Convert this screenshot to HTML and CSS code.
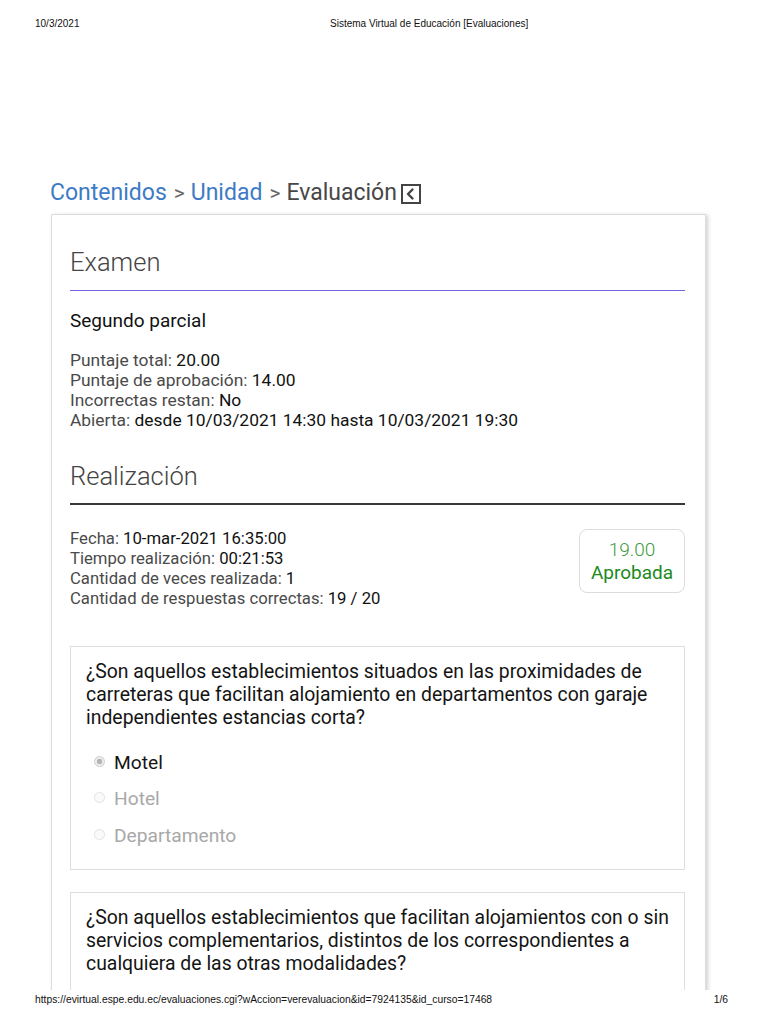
FILE: index.html
```html
<!DOCTYPE html>
<html lang="es">
<head>
<meta charset="utf-8">
<title>Sistema Virtual de Educación [Evaluaciones]</title>
<link rel="stylesheet" href="styles.css">
</head>
<body>
<div class="page">
  <header class="print-header">
    <span class="ph-date">10/3/2021</span>
    <span class="ph-title">Sistema Virtual de Educación [Evaluaciones]</span>
  </header>
  <main class="content">
    <nav class="breadcrumb">
      <a class="crumb-link">Contenidos</a><span class="sep">&gt;</span><a class="crumb-link">Unidad</a><span class="sep">&gt;</span><span class="crumb-current">Evaluación</span>
      <span class="back-icon"><svg viewBox="0 0 20 20" width="20" height="20"><rect x="1" y="1" width="18" height="18" fill="none" stroke="#444" stroke-width="2"/><path d="M11.5 5.5 L7 10 L11.5 14.5" fill="none" stroke="#444" stroke-width="2.4" stroke-linecap="round" stroke-linejoin="round"/></svg></span>
    </nav>
    <section class="card">
      <h2 class="section-title">Examen</h2>
      <hr class="rule rule-purple">
      <div class="exam-name">Segundo parcial</div>
      <div class="info info-exam">
        <div><span class="lbl">Puntaje total:</span> 20.00</div>
        <div><span class="lbl">Puntaje de aprobación:</span> 14.00</div>
        <div><span class="lbl">Incorrectas restan:</span> No</div>
        <div><span class="lbl">Abierta:</span> desde 10/03/2021 14:30 hasta 10/03/2021 19:30</div>
      </div>
      <h2 class="section-title title-2">Realización</h2>
      <hr class="rule rule-dark">
      <div class="result-row">
        <div class="info info-result">
          <div><span class="lbl">Fecha:</span> 10-mar-2021 16:35:00</div>
          <div><span class="lbl">Tiempo realización:</span> 00:21:53</div>
          <div><span class="lbl">Cantidad de veces realizada:</span> 1</div>
          <div><span class="lbl">Cantidad de respuestas correctas:</span> 19 / 20</div>
        </div>
        <div class="score">
          <div class="score-num">19.00</div>
          <div class="score-state">Aprobada</div>
        </div>
      </div>
      <div class="question">
        <p class="q-text">¿Son aquellos establecimientos situados en las proximidades de carreteras que facilitan alojamiento en departamentos con garaje independientes estancias corta?</p>
        <ul class="options">
          <li class="opt opt-selected"><span class="radio checked"></span>Motel</li>
          <li class="opt opt-dim"><span class="radio"></span>Hotel</li>
          <li class="opt opt-dim"><span class="radio"></span>Departamento</li>
        </ul>
      </div>
      <div class="question question-cut">
        <p class="q-text">¿Son aquellos establecimientos que facilitan alojamientos con o sin servicios complementarios, distintos de los correspondientes a cualquiera de las otras modalidades?</p>
      </div>
    </section>
  </main>
  <footer class="print-footer">
    <span class="pf-url">https://evirtual.espe.edu.ec/evaluaciones.cgi?wAccion=verevaluacion&amp;id=7924135&amp;id_curso=17468</span>
    <span class="pf-page">1/6</span>
  </footer>
</div>
</body>
</html>
```
FILE: styles.css
```css
html, body {
  margin: 0;
  padding: 0;
  background: #fff;
}
.page {
  width: 768px;
  height: 1024px;
  display: flex;
  flex-direction: column;
  overflow: hidden;
}
.print-header {
  height: 48px;
  flex: none;
  display: flex;
  align-items: flex-start;
  padding: 18px 0 0 35px;
  box-sizing: border-box;
  font-family: "Liberation Sans", Arial, sans-serif;
  font-size: 10px;
  color: #111;
}
.ph-date { width: 50px; }
.ph-title { margin-left: 245px; }

.content {
  flex: 1;
  overflow: hidden;
  padding: 0 62px 0 51px;
  font-family: Roboto, "Noto Sans", sans-serif;
}
.breadcrumb {
  margin-top: 130px;
  height: 30px;
  display: flex;
  align-items: center;
  font-size: 23px;
  line-height: 30px;
  color: #666;
  margin-left: -1px;
}
.crumb-link { color: #3d7bc6; }
.sep { margin: 0 6px 0 7px; color: #666; font-size: 21px; }
.crumb-current { color: #474747; }
.back-icon { display: inline-flex; margin-left: 4px; margin-top: 2px; }

.card {
  margin-top: 6px;
  border: 1px solid #ddd;
  box-shadow: 2px 1px 4px rgba(0,0,0,0.18);
  padding: 33px 20px 0 18px;
  min-height: 900px;
}
.section-title {
  margin: 0;
  font-weight: 300;
  font-size: 25.5px;
  line-height: 28px;
  color: #444;
}
.title-2 { margin-top: 32px; }
.rule {
  border: 0;
  margin: 14px 0 0 0;
}
.rule-purple { height: 1px; background: #6f63e6; }
.rule-dark { height: 2px; background: #383838; margin-top: 13px; }
.exam-name {
  margin-top: 19px;
  font-size: 19px;
  line-height: 22px;
  color: #111;
}
.info {
  font-size: 17.4px;
  line-height: 20px;
  color: #111;
}
.info-exam { margin-top: 18px; }
.info-result { font-size: 16.7px; }
.lbl { color: #4a4a4a; }
.result-row {
  margin-top: 24px;
  display: flex;
  justify-content: space-between;
  align-items: flex-start;
}
.score {
  width: 106px;
  box-sizing: border-box;
  margin-top: 0;
  border: 1px solid #dcdcdc;
  border-radius: 8px;
  padding: 8px 0 8px;
  text-align: center;
  font-size: 19px;
  line-height: 23px;
}
.score-num { color: #3f9a3f; font-weight: 300; }
.score-state { color: #1c8a1c; }

.question {
  margin-top: 37px;
  border: 1px solid #dedede;
  padding: 13px 15px 15px 15px;
}
.question-cut { margin-top: 22px; min-height: 300px; }
.q-text {
  margin: 0;
  font-size: 19.4px;
  line-height: 23px;
  color: #141414;
}
.options {
  list-style: none;
  margin: 15px 0 0 0;
  padding: 0 0 0 8px;
}
.opt {
  display: flex;
  align-items: center;
  height: 36.5px;
  font-size: 19.2px;
}
.opt-selected { color: #151515; }
.opt-dim { color: #a8a8a8; }
.radio {
  width: 11px;
  height: 11px;
  box-sizing: border-box;
  border: 1px solid #e2e2e2;
  border-radius: 50%;
  margin-right: 9px;
  margin-top: -2px;
  background: #fafafa;
}
.radio.checked {
  border-color: #cfcfcf;
  background: radial-gradient(circle, #b5b5b5 0 2.6px, #ececec 3px);
}

.print-footer {
  height: 34px;
  flex: none;
  display: flex;
  justify-content: space-between;
  padding: 4px 40px 0 35px;
  box-sizing: border-box;
  font-family: "Liberation Sans", Arial, sans-serif;
  font-size: 10.3px;
  color: #111;
}
```
